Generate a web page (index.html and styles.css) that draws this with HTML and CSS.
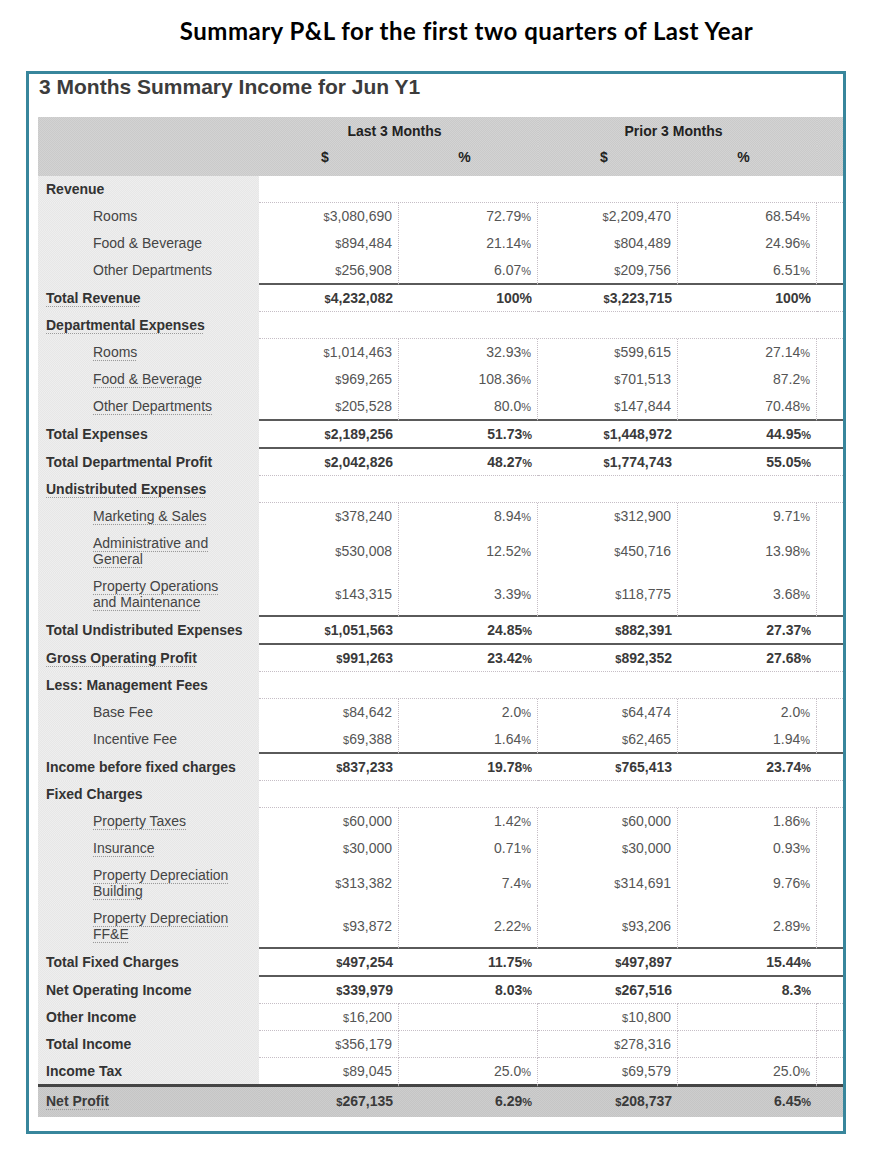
FILE: index.html
```html
<!DOCTYPE html>
<html lang="en">
<head>
<meta charset="utf-8">
<title>Summary P&amp;L</title>
<link rel="stylesheet" href="styles.css">
</head>
<body>
<h1 class="page-title">Summary P&amp;L for the first two quarters of Last Year</h1>
<section class="panel">
  <h2 class="panel-title">3 Months Summary Income for Jun Y1</h2>
  <table class="pl">
    <colgroup>
      <col class="c-lab"><col class="c-num"><col class="c-pct"><col class="c-num"><col class="c-pct"><col class="c-end">
    </colgroup>
    <thead>
      <tr class="hd hd1"><th class="lab" rowspan="2"></th><th colspan="2">Last 3 Months</th><th colspan="2">Prior 3 Months</th><th></th></tr>
      <tr class="hd hd2"><th>$</th><th>%</th><th>$</th><th>%</th><th></th></tr>
    </thead>
    <tbody>
      <tr class="sec b-dot"><th class="lab">Revenue</th><td colspan="5"></td></tr>
      <tr class="det"><th class="lab sub"><div class="w">Rooms</div></th><td class="v"><small>$</small>3,080,690</td><td class="v">72.79<small>%</small></td><td class="v"><small>$</small>2,209,470</td><td class="v">68.54<small>%</small></td><td></td></tr>
      <tr class="det"><th class="lab sub"><div class="w">Food &amp; Beverage</div></th><td class="v"><small>$</small>894,484</td><td class="v">21.14<small>%</small></td><td class="v"><small>$</small>804,489</td><td class="v">24.96<small>%</small></td><td></td></tr>
      <tr class="det b-dark"><th class="lab sub"><div class="w">Other Departments</div></th><td class="v"><small>$</small>256,908</td><td class="v">6.07<small>%</small></td><td class="v"><small>$</small>209,756</td><td class="v">6.51<small>%</small></td><td></td></tr>
      <tr class="tot b-dot"><th class="lab"><span class="u">Total Revenue</span></th><td><small>$</small>4,232,082</td><td>100%</td><td><small>$</small>3,223,715</td><td>100%</td><td></td></tr>

      <tr class="sec b-dot"><th class="lab"><span class="u">Departmental Expenses</span></th><td colspan="5"></td></tr>
      <tr class="det"><th class="lab sub"><div class="w"><span class="u">Rooms</span></div></th><td class="v"><small>$</small>1,014,463</td><td class="v">32.93<small>%</small></td><td class="v"><small>$</small>599,615</td><td class="v">27.14<small>%</small></td><td></td></tr>
      <tr class="det"><th class="lab sub"><div class="w"><span class="u">Food &amp; Beverage</span></div></th><td class="v"><small>$</small>969,265</td><td class="v">108.36<small>%</small></td><td class="v"><small>$</small>701,513</td><td class="v">87.2<small>%</small></td><td></td></tr>
      <tr class="det b-dark"><th class="lab sub"><div class="w"><span class="u">Other Departments</span></div></th><td class="v"><small>$</small>205,528</td><td class="v">80.0<small>%</small></td><td class="v"><small>$</small>147,844</td><td class="v">70.48<small>%</small></td><td></td></tr>
      <tr class="tot b-dark"><th class="lab">Total Expenses</th><td><small>$</small>2,189,256</td><td>51.73<small>%</small></td><td><small>$</small>1,448,972</td><td>44.95<small>%</small></td><td></td></tr>
      <tr class="tot b-dot"><th class="lab">Total Departmental Profit</th><td><small>$</small>2,042,826</td><td>48.27<small>%</small></td><td><small>$</small>1,774,743</td><td>55.05<small>%</small></td><td></td></tr>

      <tr class="sec b-dot"><th class="lab"><span class="u">Undistributed Expenses</span></th><td colspan="5"></td></tr>
      <tr class="det"><th class="lab sub"><div class="w"><span class="u">Marketing &amp; Sales</span></div></th><td class="v"><small>$</small>378,240</td><td class="v">8.94<small>%</small></td><td class="v"><small>$</small>312,900</td><td class="v">9.71<small>%</small></td><td></td></tr>
      <tr class="det"><th class="lab sub"><div class="w"><span class="u">Administrative and General</span></div></th><td class="v"><small>$</small>530,008</td><td class="v">12.52<small>%</small></td><td class="v"><small>$</small>450,716</td><td class="v">13.98<small>%</small></td><td></td></tr>
      <tr class="det b-dark"><th class="lab sub"><div class="w"><span class="u">Property Operations and Maintenance</span></div></th><td class="v"><small>$</small>143,315</td><td class="v">3.39<small>%</small></td><td class="v"><small>$</small>118,775</td><td class="v">3.68<small>%</small></td><td></td></tr>
      <tr class="tot b-dark"><th class="lab">Total Undistributed Expenses</th><td><small>$</small>1,051,563</td><td>24.85<small>%</small></td><td><small>$</small>882,391</td><td>27.37<small>%</small></td><td></td></tr>
      <tr class="tot b-dot"><th class="lab"><span class="u">Gross Operating Profit</span></th><td><small>$</small>991,263</td><td>23.42<small>%</small></td><td><small>$</small>892,352</td><td>27.68<small>%</small></td><td></td></tr>

      <tr class="sec b-dot"><th class="lab">Less: Management Fees</th><td colspan="5"></td></tr>
      <tr class="det"><th class="lab sub"><div class="w">Base Fee</div></th><td class="v"><small>$</small>84,642</td><td class="v">2.0<small>%</small></td><td class="v"><small>$</small>64,474</td><td class="v">2.0<small>%</small></td><td></td></tr>
      <tr class="det b-dark"><th class="lab sub"><div class="w">Incentive Fee</div></th><td class="v"><small>$</small>69,388</td><td class="v">1.64<small>%</small></td><td class="v"><small>$</small>62,465</td><td class="v">1.94<small>%</small></td><td></td></tr>
      <tr class="tot b-dot"><th class="lab">Income before fixed charges</th><td><small>$</small>837,233</td><td>19.78<small>%</small></td><td><small>$</small>765,413</td><td>23.74<small>%</small></td><td></td></tr>

      <tr class="sec b-dot"><th class="lab">Fixed Charges</th><td colspan="5"></td></tr>
      <tr class="det"><th class="lab sub"><div class="w"><span class="u">Property Taxes</span></div></th><td class="v"><small>$</small>60,000</td><td class="v">1.42<small>%</small></td><td class="v"><small>$</small>60,000</td><td class="v">1.86<small>%</small></td><td></td></tr>
      <tr class="det"><th class="lab sub"><div class="w"><span class="u">Insurance</span></div></th><td class="v"><small>$</small>30,000</td><td class="v">0.71<small>%</small></td><td class="v"><small>$</small>30,000</td><td class="v">0.93<small>%</small></td><td></td></tr>
      <tr class="det"><th class="lab sub"><div class="w"><span class="u">Property Depreciation Building</span></div></th><td class="v"><small>$</small>313,382</td><td class="v">7.4<small>%</small></td><td class="v"><small>$</small>314,691</td><td class="v">9.76<small>%</small></td><td></td></tr>
      <tr class="det b-dark"><th class="lab sub"><div class="w"><span class="u">Property Depreciation FF&amp;E</span></div></th><td class="v"><small>$</small>93,872</td><td class="v">2.22<small>%</small></td><td class="v"><small>$</small>93,206</td><td class="v">2.89<small>%</small></td><td></td></tr>
      <tr class="tot b-dark"><th class="lab">Total Fixed Charges</th><td><small>$</small>497,254</td><td>11.75<small>%</small></td><td><small>$</small>497,897</td><td>15.44<small>%</small></td><td></td></tr>
      <tr class="tot b-dot"><th class="lab">Net Operating Income</th><td><small>$</small>339,979</td><td>8.03<small>%</small></td><td><small>$</small>267,516</td><td>8.3<small>%</small></td><td></td></tr>

      <tr class="det b-dot"><th class="lab">Other Income</th><td class="v"><small>$</small>16,200</td><td class="v"></td><td class="v"><small>$</small>10,800</td><td class="v"></td><td></td></tr>
      <tr class="det b-dot"><th class="lab">Total Income</th><td class="v"><small>$</small>356,179</td><td class="v"></td><td class="v"><small>$</small>278,316</td><td class="v"></td><td></td></tr>
      <tr class="det b-np"><th class="lab">Income Tax</th><td class="v"><small>$</small>89,045</td><td class="v">25.0<small>%</small></td><td class="v"><small>$</small>69,579</td><td class="v">25.0<small>%</small></td><td></td></tr>
      <tr class="np"><th class="lab"><span class="u">Net Profit</span></th><td><small>$</small>267,135</td><td>6.29<small>%</small></td><td><small>$</small>208,737</td><td>6.45<small>%</small></td><td></td></tr>
    </tbody>
  </table>
</section>
</body>
</html>
```
FILE: styles.css
```css
body {
  margin: 0;
  background: #ffffff;
  font-family: "Liberation Sans", Arial, sans-serif;
}

.page-title {
  margin: 18px 0 0;
  padding-left: 62px;
  text-align: center;
  font-family: Lato, "Open Sans", sans-serif;
  font-weight: 700;
  font-size: 24px;
  letter-spacing: 0.5px;
  line-height: 25px;
  color: #000;
}

.panel {
  margin: 28px 0 0 26px;
  width: 805px;
  padding: 1px 0 14px 9px;
  border: 3px solid #38869c;
}

.panel-title {
  margin: 0 0 18px 1px;
  font-family: "Liberation Sans", Arial, sans-serif;
  font-weight: 700;
  font-size: 21px;
  line-height: 24px;
  color: #3c3c3c;
}

.pl {
  border-collapse: separate;
  border-spacing: 0;
  table-layout: fixed;
  width: 805px;
  font-size: 14px;
  line-height: 16px;
}

.c-lab { width: 221px; }
.c-num { width: 140px; }
.c-pct { width: 139px; }
.c-end { width: 26px; }

.pl th,
.pl td {
  padding: 5px 6px 5px 0;
  border-bottom: 1px solid transparent;
  vertical-align: middle;
}

.pl td {
  text-align: right;
  color: #555;
  background: #fff;
}

.pl small {
  font-size: 11px;
  line-height: 1;
}

/* header */
.pl .hd th {
  background-color: #cecece;
  background-image: repeating-conic-gradient(#cacaca 0 25%, #d3d3d3 0 50%);
  background-size: 2px 2px;
  color: #222;
  font-weight: 700;
  text-align: center;
  border-bottom: 0;
  padding-right: 8px;
}
.pl .hd1 th { padding-top: 6px; padding-bottom: 7px; }
.pl .hd2 th { padding-top: 3px; padding-bottom: 11px; }

/* label column */
.pl .lab {
  text-align: left;
  padding-left: 8px;
  font-weight: 700;
  color: #333;
  background-color: #eaeaea;
  background-image: repeating-conic-gradient(#e7e7e7 0 25%, #eeeeee 0 50%);
  background-size: 2px 2px;
}
.pl .lab.sub {
  padding-left: 55px;
  font-weight: 400;
  color: #444;
}
.w {
  max-width: 146px;
}
.u {
  text-decoration: underline dotted #9a9a9a;
  text-decoration-thickness: 1px;
  text-underline-offset: 3px;
}

/* rows */
.pl .v {
  border-right: 1px dotted #c6bec6;
}
.pl .b-dot > td {
  border-bottom: 1px dotted #c6bec6;
}
.pl .b-dark > td {
  border-bottom: 2px solid #5a5a5a;
}
.pl .b-dark > th {
  border-bottom: 2px solid transparent;
}
.pl .b-np > td,
.pl .b-np > th {
  border-bottom: 3px solid #454545;
}

.pl .tot td {
  font-weight: 700;
  color: #3a3a3a;
}

.pl .np th,
.pl .np td {
  padding-top: 6px;
  padding-bottom: 7px;
  font-weight: 700;
  color: #3a3a3a;
  background-color: #c9c9c9;
  background-image: repeating-conic-gradient(#c5c5c5 0 25%, #cdcdcd 0 50%);
  background-size: 2px 2px;
}
```
